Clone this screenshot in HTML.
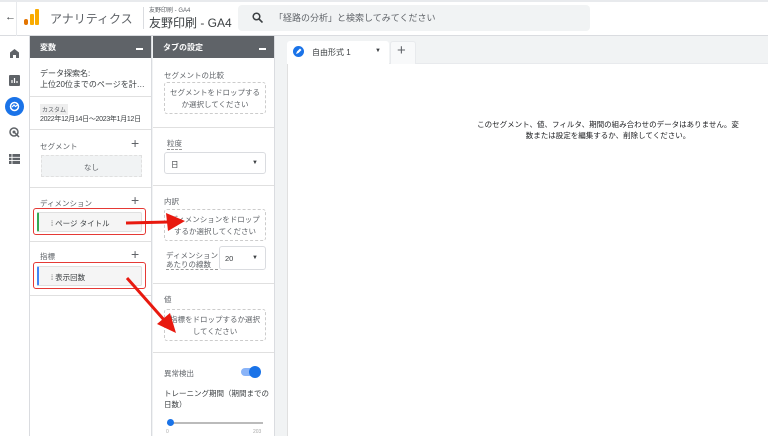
<!DOCTYPE html>
<html><head><meta charset="utf-8"><style>
*{box-sizing:border-box;margin:0;padding:0}
body{width:768px;height:436px;overflow:hidden;background:#f1f3f4;font-family:"Liberation Sans","Noto Sans CJK JP",sans-serif;color:#3c4043;position:relative;font-size:8px}
.a{position:absolute}
.top{left:0;top:0;width:768px;height:36px;background:#fff;border-top:2px solid #e8eaed;border-bottom:1px solid #dadce0}
.nav{left:0;top:36px;width:30px;height:400px;background:#fff;border-right:1px solid #dadce0}
.p{top:36px;width:122px;height:400px;background:#fff;border-right:1px solid #dadce0}
.ph{left:0;top:0;width:100%;height:22px;background:#5f6368;color:#fff;font-size:8px;font-weight:bold;padding:6px 0 0 10px}
.ph i{position:absolute;right:8px;top:12px;width:7px;height:1.5px;background:#fff}
.hr{left:0;width:100%;height:1px;background:#e0e0e0}
.lbl{font-size:7.5px;color:#5f6368}
.drop{border:1px dashed #ccc;border-radius:3px;text-align:center;font-size:7.5px;color:#5f6368;line-height:12px;padding-top:4px}
.plus{font-size:14px;color:#5f6368;font-weight:300}
.chip{border:1px solid #e0e0e0;border-radius:2px;background:#f5f5f5;font-size:7.5px;padding:5px 0 0 12px;height:20px}
.red{border:1.5px solid #e53935;border-radius:3px}
</style></head><body>
<div class="a top"></div>
<div class="a" style="left:5px;top:11px;font-size:11px">←</div>
<div class="a" style="left:16px;top:0;width:1px;height:36px;background:#e8eaed"></div>
<svg class="a" style="left:24px;top:9px" width="16" height="17"><rect x="0" y="10" width="4" height="6" rx="2" fill="#e37400"/><rect x="6" y="5" width="4" height="11" rx="1" fill="#f9ab00"/><rect x="11" y="0" width="4" height="16" rx="1" fill="#f9ab00"/></svg>
<div class="a" style="left:50px;top:10px;font-size:12px;color:#5f6368">アナリティクス</div>
<div class="a" style="left:143px;top:7px;width:1px;height:22px;background:#dadce0"></div>
<div class="a" style="left:149px;top:5px;font-size:6px;color:#5f6368">友野印刷 - GA4</div>
<div class="a" style="left:149px;top:14px;font-size:12px;color:#3c4043">友野印刷 - GA4</div>
<div class="a" style="left:238px;top:5px;width:352px;height:26px;background:#f1f3f4;border-radius:4px"></div>
<svg class="a" style="left:252px;top:12px" width="11" height="11"><circle cx="4.5" cy="4.5" r="3.3" stroke="#3c4043" stroke-width="1.5" fill="none"/><path d="M7 7l3.5 3.5" stroke="#3c4043" stroke-width="1.6"/></svg>
<div class="a" style="left:274px;top:11px;font-size:9px;color:#5f6368">「経路の分析」と検索してみてください</div>

<div class="a nav"></div>
<svg class="a" style="left:9px;top:48px" width="11" height="10"><path d="M1 10V4.5L5.5 1 10 4.5V10H7V7H4v3z" fill="#5f6368"/></svg>
<svg class="a" style="left:9px;top:75px" width="11" height="11"><rect width="11" height="11" rx="1" fill="#5f6368"/><path d="M3 8V5M5.5 8V3M8 8V6" stroke="#fff" stroke-width="1.2"/></svg>
<div class="a" style="left:5px;top:97px;width:19px;height:19px;border-radius:50%;background:#1a73e8"></div>
<svg class="a" style="left:9px;top:101px" width="11" height="11"><circle cx="5.5" cy="5.5" r="4" stroke="#fff" stroke-width="1.5" fill="none"/><path d="M3 6l2-2 1.5 1.5L8.5 4" stroke="#fff" stroke-width="1.2" fill="none"/></svg>
<svg class="a" style="left:9px;top:127px" width="11" height="11"><circle cx="5" cy="5" r="4" stroke="#5f6368" stroke-width="1.5" fill="none"/><circle cx="5" cy="5" r="1.5" fill="#5f6368"/><path d="M6 6l4 4" stroke="#5f6368" stroke-width="1.5"/></svg>
<svg class="a" style="left:9px;top:154px" width="11" height="10"><rect width="11" height="10" fill="#5f6368"/><path d="M0 3.3h11M0 6.6h11M3 0v10" stroke="#fff" stroke-width=".9"/></svg>

<!-- panel 1 -->
<div class="a p" style="left:30px">
 <div class="a ph">変数<i></i></div>
 <div class="a" style="left:10px;top:32px;font-size:8px;line-height:11px">データ探索名:<br>上位20位までのページを計…</div>
 <div class="a hr" style="top:60px"></div>
 <div class="a" style="left:10px;top:68px;font-size:6px;background:#eee;padding:1px 2px;color:#5f6368">カスタム</div>
 <div class="a" style="left:10px;top:78px;font-size:7px;letter-spacing:-0.3px;white-space:nowrap">2022年12月14日～2023年1月12日</div>
 <div class="a hr" style="top:93px"></div>
 <div class="a lbl" style="left:10px;top:105px">セグメント</div>
 <div class="a plus" style="left:101px;top:99px">+</div>
 <div class="a" style="left:11px;top:119px;width:101px;height:22px;background:#f1f3f4;border:1px dashed #e0e0e0;font-size:7.5px;color:#5f6368;text-align:center;padding-top:6px">なし</div>
 <div class="a hr" style="top:151px"></div>
 <div class="a lbl" style="left:10px;top:162px">ディメンション</div>
 <div class="a plus" style="left:101px;top:156px">+</div>
 <div class="a red" style="left:3px;top:172px;width:113px;height:27px"></div>
 <div class="a chip" style="left:7px;top:176px;width:105px;border-left:2px solid #34a853">⁞ ページ タイトル</div>
 <div class="a hr" style="top:205px"></div>
 <div class="a lbl" style="left:10px;top:215px">指標</div>
 <div class="a plus" style="left:101px;top:210px">+</div>
 <div class="a red" style="left:3px;top:226px;width:113px;height:27px"></div>
 <div class="a chip" style="left:7px;top:230px;width:105px;border-left:2px solid #4285f4">⁞ 表示回数</div>
 <div class="a hr" style="top:259px"></div>
</div>

<!-- panel 2 -->
<div class="a p" style="left:153px">
 <div class="a ph">タブの設定<i></i></div>
 <div class="a lbl" style="left:11px;top:34px">セグメントの比較</div>
 <div class="a drop" style="left:11px;top:46px;width:102px;height:32px">セグメントをドロップする<br>か選択してください</div>
 <div class="a hr" style="top:91px"></div>
 <div class="a lbl" style="left:14px;top:102px;border-bottom:1px dashed #999">粒度</div>
 <div class="a" style="left:11px;top:116px;width:102px;height:22px;border:1px solid #dadce0;border-radius:3px;font-size:7.5px;padding:6px 0 0 6px">日<span style="position:absolute;right:7px;top:7px;font-size:6px">▼</span></div>
 <div class="a hr" style="top:149px"></div>
 <div class="a lbl" style="left:11px;top:160px">内訳</div>
 <div class="a drop" style="left:11px;top:173px;width:102px;height:32px">ディメンションをドロップ<br>するか選択してください</div>
 <div class="a lbl" style="left:13px;top:215px;line-height:9px;border-bottom:1px dashed #999">ディメンション<br>あたりの線数</div>
 <div class="a" style="left:66px;top:210px;width:47px;height:24px;border:1px solid #dadce0;border-radius:3px;font-size:7.5px;padding:7px 0 0 5px">20<span style="position:absolute;right:7px;top:8px;font-size:6px">▼</span></div>
 <div class="a hr" style="top:247px"></div>
 <div class="a lbl" style="left:11px;top:258px">値</div>
 <div class="a drop" style="left:11px;top:273px;width:102px;height:32px">指標をドロップするか選択<br>してください</div>
 <div class="a hr" style="top:316px"></div>
 <div class="a lbl" style="left:11px;top:332px">異常検出</div>
 <div class="a" style="left:88px;top:332px;width:18px;height:8px;border-radius:4px;background:#8ab4f8"></div>
 <div class="a" style="left:96px;top:330px;width:12px;height:12px;border-radius:50%;background:#1a73e8"></div>
 <div class="a" style="left:11px;top:352px;font-size:7.5px;line-height:11px">トレーニング期間（期間までの<br>日数）</div>
 <div class="a" style="left:14px;top:386px;width:96px;height:1.5px;background:#bbb"></div>
 <div class="a" style="left:14px;top:383px;width:7px;height:7px;border-radius:50%;background:#1a73e8"></div>
 <div class="a" style="left:13px;top:393px;font-size:5px;color:#aaa">0</div>
 <div class="a" style="left:100px;top:393px;font-size:5px;color:#aaa">203</div>
</div>

<!-- canvas -->
<div class="a" style="left:287px;top:63px;width:481px;height:373px;background:#fff;border-left:1px solid #e0e0e0;border-top:1px solid #e8eaed"></div>
<div class="a" style="left:287px;top:41px;width:102px;height:23px;background:#fff;border-radius:3px 3px 0 0"></div>
<div class="a" style="left:293px;top:46px;width:11px;height:11px;border-radius:50%;background:#1a73e8"></div>
<svg class="a" style="left:295px;top:48px" width="7" height="7"><path d="M1 6l1-2.5 3-3 1.5 1.5-3 3z" fill="#fff"/></svg>
<div class="a" style="left:312px;top:47px;font-size:8px">自由形式 1</div>
<div class="a" style="left:375px;top:48px;font-size:6px">▼</div>
<div class="a" style="left:390px;top:41px;width:26px;height:23px;background:#f8f9fa;border-radius:3px 3px 0 0;border:1px solid #e8eaed;border-bottom:none"></div>
<div class="a" style="left:397px;top:42px;font-size:15px;color:#5f6368;font-weight:300">+</div>
<div class="a" style="left:470px;top:119px;width:276px;text-align:center;font-size:7.5px;line-height:11px;color:#202124">このセグメント、値、フィルタ、期間の組み合わせのデータはありません。変<br>数または設定を編集するか、削除してください。</div>

<!-- arrows -->
<svg class="a" style="left:0;top:0" width="768" height="436">
<path d="M126 223L168 222" stroke="#e8190f" stroke-width="3"/>
<path d="M185 221L166 213 168 231z" fill="#e8190f"/>
<path d="M127 278L165 321" stroke="#e8190f" stroke-width="3"/>
<path d="M176 333L170 313 157 324z" fill="#e8190f"/>
</svg>
</body></html>
